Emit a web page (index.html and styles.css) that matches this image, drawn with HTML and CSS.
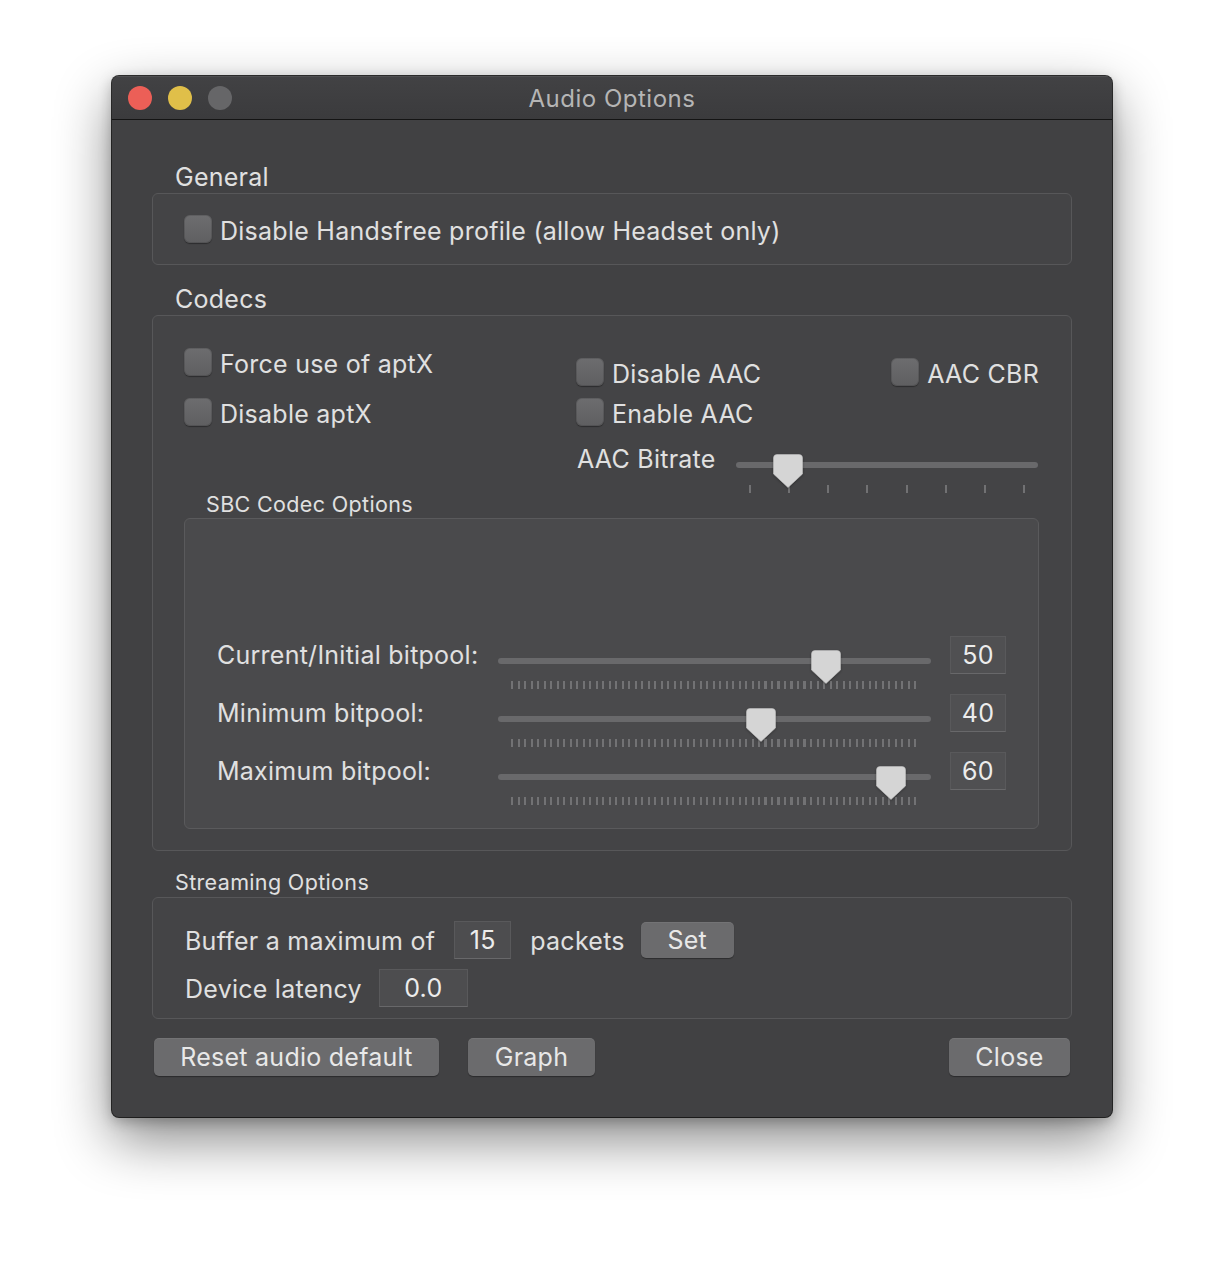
FILE: index.html
```html
<!DOCTYPE html>
<html lang="en">
<head>
<meta charset="utf-8">
<title>Audio Options</title>
<link rel="stylesheet" href="styles.css">
</head>
<body>
<div class="window">
  <header class="titlebar">
    <div class="lights">
      <span class="light red"></span>
      <span class="light yellow"></span>
      <span class="light grey"></span>
    </div>
    <div class="title">Audio Options</div>
    <div></div>
  </header>

  <main class="content">
    <section class="group">
      <div class="group-label">General</div>
      <div class="group-box general-box">
        <label class="check"><span class="box"></span><span class="cap">Disable Handsfree profile (allow Headset only)</span></label>
      </div>
    </section>

    <section class="group codecs">
      <div class="group-label">Codecs</div>
      <div class="group-box codecs-box">
        <div class="codec-top">
          <div class="aptx-col">
            <label class="check"><span class="box"></span><span class="cap">Force use of aptX</span></label>
            <label class="check"><span class="box"></span><span class="cap">Disable aptX</span></label>
          </div>
          <div class="aac-col">
            <div class="aac-row">
              <label class="check"><span class="box"></span><span class="cap">Disable AAC</span></label>
              <label class="check"><span class="box"></span><span class="cap">AAC CBR</span></label>
            </div>
            <div class="aac-row">
              <label class="check"><span class="box"></span><span class="cap">Enable AAC</span></label>
            </div>
            <div class="bitrate-row">
              <span class="text">AAC Bitrate</span>
              <div class="slider slider-aac">
                <div class="track"></div>
                <div class="ticks ticks-few">
                  <i></i><i></i><i></i><i></i><i></i><i></i><i></i><i></i>
                </div>
                <svg class="thumb" style="left:37px" width="30" height="34" viewBox="0 0 30 34"><path d="M4 0.5H26Q29.5 0.5 29.5 4V20L15 33.5L0.5 20V4Q0.5 0.5 4 0.5Z"/></svg>
              </div>
            </div>
          </div>
        </div>

        <div class="sub-label">SBC Codec Options</div>
        <div class="sbc-box">
          <div class="sbc-row">
            <span class="text sbc-name">Current/Initial bitpool:</span>
            <div class="slider slider-sbc">
              <div class="track"></div>
              <div class="ticks ticks-many"></div>
              <svg class="thumb" style="left:313px" width="30" height="34" viewBox="0 0 30 34"><path d="M4 0.5H26Q29.5 0.5 29.5 4V20L15 33.5L0.5 20V4Q0.5 0.5 4 0.5Z"/></svg>
            </div>
            <div class="field num">50</div>
          </div>
          <div class="sbc-row">
            <span class="text sbc-name">Minimum bitpool:</span>
            <div class="slider slider-sbc">
              <div class="track"></div>
              <div class="ticks ticks-many"></div>
              <svg class="thumb" style="left:248px" width="30" height="34" viewBox="0 0 30 34"><path d="M4 0.5H26Q29.5 0.5 29.5 4V20L15 33.5L0.5 20V4Q0.5 0.5 4 0.5Z"/></svg>
            </div>
            <div class="field num">40</div>
          </div>
          <div class="sbc-row">
            <span class="text sbc-name">Maximum bitpool:</span>
            <div class="slider slider-sbc">
              <div class="track"></div>
              <div class="ticks ticks-many"></div>
              <svg class="thumb" style="left:378px" width="30" height="34" viewBox="0 0 30 34"><path d="M4 0.5H26Q29.5 0.5 29.5 4V20L15 33.5L0.5 20V4Q0.5 0.5 4 0.5Z"/></svg>
            </div>
            <div class="field num">60</div>
          </div>
        </div>
      </div>
    </section>

    <section class="group streaming">
      <div class="group-label small">Streaming Options</div>
      <div class="group-box streaming-box">
        <div class="stream-row">
          <span class="text">Buffer a maximum of</span>
          <div class="field packets">15</div>
          <span class="text">packets</span>
          <button class="btn set">Set</button>
        </div>
        <div class="stream-row">
          <span class="text">Device latency</span>
          <div class="field latency">0.0</div>
        </div>
      </div>
    </section>

    <div class="actions">
      <button class="btn reset">Reset audio default</button>
      <button class="btn graph">Graph</button>
      <button class="btn close">Close</button>
    </div>
  </main>
</div>
</body>
</html>
```

FILE: styles.css
```css
* { box-sizing: border-box; }

html, body {
  margin: 0;
  padding: 0;
  background: #ffffff;
}

body {
  width: 1224px;
  height: 1266px;
  overflow: hidden;
  font-family: "Inter", "Liberation Sans", sans-serif;
  color: #dedede;
  letter-spacing: 0.25px;
}

/* ---- window frame ---- */
.window {
  margin: 76px 0 0 112px;
  width: 1000px;
  height: 1041px;
  background: #414143;
  border-radius: 7px;
  box-shadow:
    0 0 0 1px rgba(0, 0, 0, 0.8),
    0 22px 55px rgba(0, 0, 0, 0.48),
    0 4px 14px rgba(0, 0, 0, 0.25);
  overflow: hidden;
  display: flex;
  flex-direction: column;
}

.titlebar {
  height: 44px;
  flex: 0 0 44px;
  display: grid;
  grid-template-columns: 1fr auto 1fr;
  align-items: center;
  background: linear-gradient(#424244, #3b3b3d);
  border-bottom: 1px solid #141414;
  box-shadow: inset 0 1px 0 rgba(255, 255, 255, 0.08);
}

.lights {
  display: flex;
  gap: 16px;
  padding-left: 16px;
}

.light {
  width: 24px;
  height: 24px;
  border-radius: 50%;
}
.light.red { background: #ec5f57; }
.light.yellow { background: #e0bf49; }
.light.grey { background: #666668; }

.title {
  font-size: 24px;
  color: #b5b5b5;
  letter-spacing: 0.5px;
  padding-top: 2px;
}

/* ---- content ---- */
.content {
  flex: 1;
  padding: 43px 40px 0 40px;
  display: flex;
  flex-direction: column;
}

.group-label {
  height: 28px;
  line-height: 28px;
  font-size: 25px;
  padding-left: 23px;
  margin-bottom: 2px;
  color: #e0e0e0;
}
.group-label.small {
  height: 26px;
  line-height: 26px;
  font-size: 21.5px;
  letter-spacing: 0.35px;
}

.group-box {
  border: 1px solid #575759;
  border-radius: 6px;
  background: #444446;
}

.text {
  font-size: 25px;
  color: #e0e0e0;
  white-space: nowrap;
}

/* checkbox */
.check {
  display: flex;
  align-items: center;
  gap: 8px;
  height: 34px;
  font-size: 25px;
  color: #e0e0e0;
  white-space: nowrap;
}
.check .cap {
  padding-top: 3px;
}
.check .box {
  width: 28px;
  height: 28px;
  flex: 0 0 28px;
  border-radius: 6px;
  background: linear-gradient(#6d6d6f, #5f5f61);
  box-shadow: 0 1px 1px rgba(0, 0, 0, 0.35), inset 0 0 0 1px rgba(0, 0, 0, 0.12);
}

/* General */
.general-box {
  height: 72px;
  padding-left: 31px;
  display: flex;
  align-items: center;
}

/* Codecs */
.codecs { margin-top: 20px; }

.codecs-box {
  height: 536px;
  padding: 0 32px 21px 31px;
}

.codec-top {
  height: 175px;
  display: flex;
}

.aptx-col {
  width: 392px;
  padding-top: 29px;
  display: flex;
  flex-direction: column;
  gap: 16px;
}

.aac-col {
  flex: 1;
  padding-top: 39px;
  display: flex;
  flex-direction: column;
}

.aac-row {
  display: flex;
  justify-content: space-between;
  height: 34px;
}
.aac-row + .aac-row { margin-top: 6px; }

.bitrate-row {
  margin-top: 13px;
  display: flex;
  align-items: flex-start;
  padding-left: 1px;
}
.bitrate-row .text {
  line-height: 34px;
}

/* slider */
.slider {
  position: relative;
  height: 39px;
  padding-top: 8px;
}
.slider .track {
  height: 6px;
  border-radius: 3px;
  background: #69696b;
}
.slider .ticks {
  position: absolute;
  top: 31px;
  left: 13px;
  right: 13px;
  height: 8px;
}
.ticks-few {
  display: flex;
  justify-content: space-between;
}
.ticks-few i {
  width: 2px;
  height: 8px;
  background: #717173;
}
.ticks-many {
  background: repeating-linear-gradient(90deg, #727274 0 2px, transparent 2px 6.5px);
}
.slider .thumb {
  position: absolute;
  top: 0;
  filter: drop-shadow(0 1px 1px rgba(0, 0, 0, 0.3));
}
.slider .thumb path {
  fill: #d5d5d5;
  stroke: #c2c2c2;
  stroke-width: 0.6;
}

.slider-aac {
  width: 302px;
  margin-left: auto;
  margin-top: 12px;
  margin-right: 1px;
}

/* SBC sub group */
.sub-label {
  height: 26px;
  line-height: 26px;
  font-size: 21.5px;
  letter-spacing: 0.35px;
  padding-left: 22px;
  margin-bottom: 1px;
  color: #e0e0e0;
}

.sbc-box {
  height: 311px;
  border: 1px solid #5a5a5c;
  border-radius: 6px;
  background: #4a4a4c;
  padding: 117px 32px 0 32px;
  display: flex;
  flex-direction: column;
  gap: 20px;
}

.sbc-row {
  height: 38px;
  display: flex;
  align-items: flex-start;
}
.sbc-name {
  width: 281px;
  line-height: 38px;
}
.slider-sbc {
  width: 433px;
  margin-top: 14px;
  flex: 0 0 433px;
}

/* text fields */
.field {
  height: 38px;
  line-height: 36px;
  text-align: center;
  font-size: 25px;
  color: #ececec;
  background: #4d4d4f;
  border: 1px solid #59595b;
  border-bottom-color: #68686a;
}
.field.num {
  width: 56px;
  margin-left: 19px;
  background: #505052;
}
.field.packets { width: 57px; }
.field.latency { width: 89px; margin-left: -2px; }

/* Streaming */
.streaming { margin-top: 18px; }

.streaming-box {
  height: 122px;
  padding: 23px 0 0 32px;
  display: flex;
  flex-direction: column;
  gap: 10px;
}

.stream-row {
  height: 38px;
  display: flex;
  align-items: center;
  gap: 19px;
}
.stream-row .text { padding-top: 2px; }

/* buttons */
.btn {
  font-family: "Inter", "Liberation Sans", sans-serif;
  font-size: 25px;
  letter-spacing: 0.25px;
  color: #e8e8e8;
  background: #6b6b6d;
  border: none;
  border-radius: 5px;
  height: 38px;
  padding: 0;
  box-shadow: 0 1px 1px rgba(0, 0, 0, 0.35), inset 0 1px 0 rgba(255, 255, 255, 0.06);
}
.btn.set {
  width: 93px;
  height: 36px;
  margin-left: -3px;
}

.actions {
  margin-top: 19px;
  display: flex;
  padding: 0 2px;
}
.btn.reset { width: 285px; }
.btn.graph { width: 127px; margin-left: 29px; }
.btn.close { width: 121px; margin-left: auto; }
```
